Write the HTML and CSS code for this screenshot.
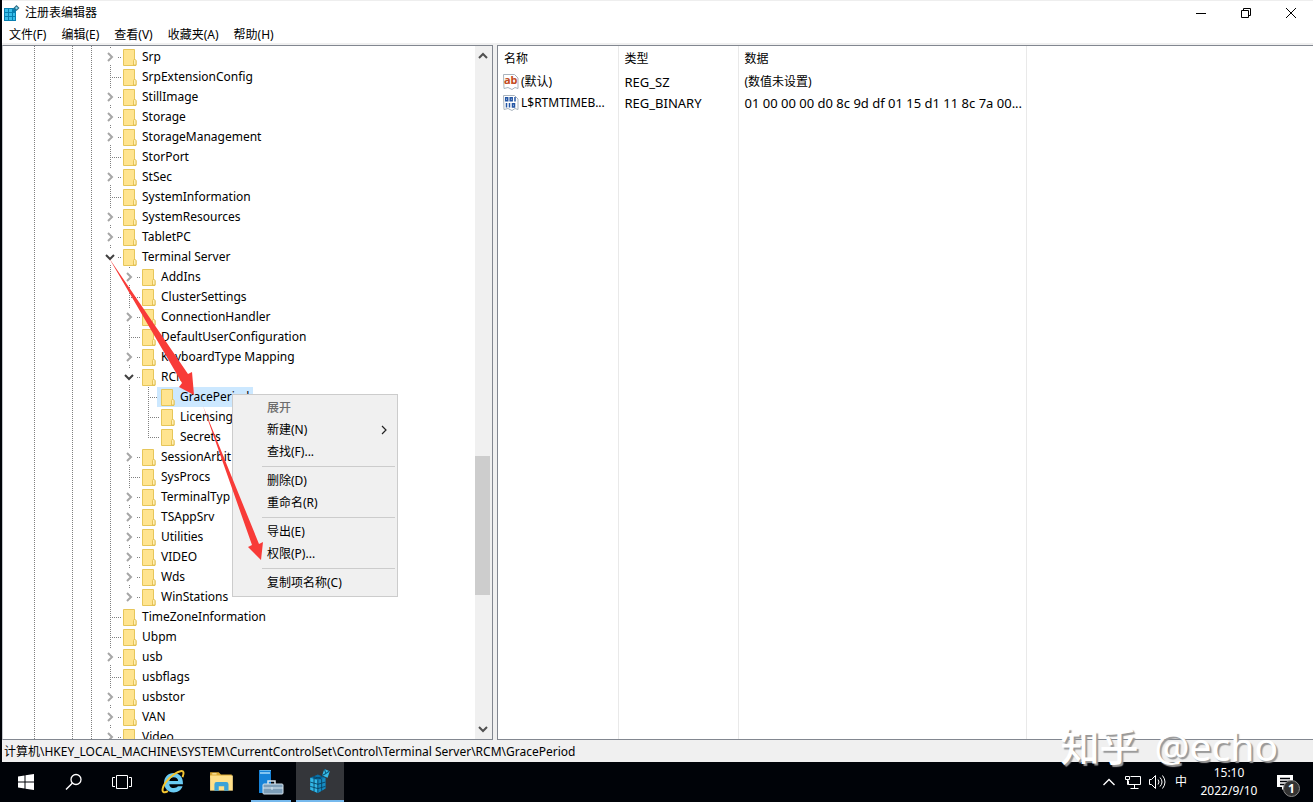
FILE: index.html
```html
<!DOCTYPE html>
<html lang="zh-CN">
<head>
    <meta charset="UTF-8">
    <meta name="viewport" content="width=device-width, initial-scale=1.0">
    <title>注册表编辑器</title>
    <link rel="stylesheet" href="styles.css">
</head>
<body>
    <svg class="symbols" aria-hidden="true">
        <symbol id="folder" viewBox="0 0 14 17">
            <path d="M.5.5h11v10l1.500 1v5H.5z" fill="#ffe48f" stroke="#e6c65a"/>
            <path d="M10.500 16v-4.500l1-1.500 1.500 1.500V16z" fill="#fff0b8" stroke="#dfba45" stroke-width=".8"/>
        </symbol>
        <symbol id="closed" viewBox="0 0 10 10"><path d="M3 1l4 4-4 4" fill="none" stroke="#a6a6a6" stroke-width="2"/></symbol>
        <symbol id="open" viewBox="0 0 10 10"><path d="M1 3l4 4 4-4" fill="none" stroke="#404040" stroke-width="2"/></symbol>
        <symbol id="regedit" viewBox="0 0 16 16">
            <path d="M0 3h12v13H0z" fill="#087fb0"/>
            <path d="M1 4h3v3H1zM5 4h3v3H5zM1 8h3v3H1zM5 8h3v3H5zM9 8h2v3H9zM1 12h3v3H1zM5 12h3v3H5zM9 12h2v3H9z" fill="#38bde9"/>
            <path d="M12.500 0l3 3-3 3-3-3z" fill="#2b6a83"/>
            <path d="M12.500 1.500L14 3l-1.500 1.500L11 3z" fill="#83d8f2"/>
        </symbol>
    </svg>

    <main class="window">
        <header class="titlebar">
            <svg class="app-icon" aria-hidden="true"><use href="#regedit"/></svg>
            <h1>注册表编辑器</h1>
            <div class="window-buttons">
                <button aria-label="最小化"><svg viewBox="0 0 12 12"><path d="M1 6.500h10"/></svg></button>
                <button aria-label="还原"><svg viewBox="0 0 12 12"><path d="M1.500 3.500h7v7h-7zM3.500 3.500v-2h7v7h-2"/></svg></button>
                <button aria-label="关闭"><svg viewBox="0 0 12 12"><path d="M1 1l10 10M11 1L1 11"/></svg></button>
            </div>
        </header>
        <nav class="menubar">
            <button>文件(F)</button>
            <button>编辑(E)</button>
            <button>查看(V)</button>
            <button>收藏夹(A)</button>
            <button>帮助(H)</button>
        </nav>

        <div class="panes">
            <section class="pane tree-pane">
                <div class="tree-scroll">
                    <ul class="tree">
                        <li><div class="row"><button class="toggle" aria-label="展开 Srp"><svg><use href="#closed"/></svg></button><span class="node"><svg><use href="#folder"/></svg>Srp</span></div></li>
                        <li><div class="row leaf"><span class="node"><svg><use href="#folder"/></svg>SrpExtensionConfig</span></div></li>
                        <li><div class="row"><button class="toggle" aria-label="展开 StillImage"><svg><use href="#closed"/></svg></button><span class="node"><svg><use href="#folder"/></svg>StillImage</span></div></li>
                        <li><div class="row"><button class="toggle" aria-label="展开 Storage"><svg><use href="#closed"/></svg></button><span class="node"><svg><use href="#folder"/></svg>Storage</span></div></li>
                        <li><div class="row"><button class="toggle" aria-label="展开 StorageManagement"><svg><use href="#closed"/></svg></button><span class="node"><svg><use href="#folder"/></svg>StorageManagement</span></div></li>
                        <li><div class="row leaf"><span class="node"><svg><use href="#folder"/></svg>StorPort</span></div></li>
                        <li><div class="row"><button class="toggle" aria-label="展开 StSec"><svg><use href="#closed"/></svg></button><span class="node"><svg><use href="#folder"/></svg>StSec</span></div></li>
                        <li><div class="row leaf"><span class="node"><svg><use href="#folder"/></svg>SystemInformation</span></div></li>
                        <li><div class="row"><button class="toggle" aria-label="展开 SystemResources"><svg><use href="#closed"/></svg></button><span class="node"><svg><use href="#folder"/></svg>SystemResources</span></div></li>
                        <li><div class="row"><button class="toggle" aria-label="展开 TabletPC"><svg><use href="#closed"/></svg></button><span class="node"><svg><use href="#folder"/></svg>TabletPC</span></div></li>
                        <li>
                            <div class="row"><button class="toggle" aria-label="折叠 Terminal Server"><svg><use href="#open"/></svg></button><span class="node"><svg><use href="#folder"/></svg>Terminal Server</span></div>
                            <ul>
                                <li><div class="row"><button class="toggle" aria-label="展开 AddIns"><svg><use href="#closed"/></svg></button><span class="node"><svg><use href="#folder"/></svg>AddIns</span></div></li>
                                <li><div class="row leaf"><span class="node"><svg><use href="#folder"/></svg>ClusterSettings</span></div></li>
                                <li><div class="row"><button class="toggle" aria-label="展开 ConnectionHandler"><svg><use href="#closed"/></svg></button><span class="node"><svg><use href="#folder"/></svg>ConnectionHandler</span></div></li>
                                <li><div class="row leaf"><span class="node"><svg><use href="#folder"/></svg>DefaultUserConfiguration</span></div></li>
                                <li><div class="row"><button class="toggle" aria-label="展开 KeyboardType Mapping"><svg><use href="#closed"/></svg></button><span class="node"><svg><use href="#folder"/></svg>KeyboardType Mapping</span></div></li>
                                <li>
                                    <div class="row"><button class="toggle" aria-label="折叠 RCM"><svg><use href="#open"/></svg></button><span class="node"><svg><use href="#folder"/></svg>RCM</span></div>
                                    <ul>
                                        <li><div class="row leaf"><span class="node selected"><svg><use href="#folder"/></svg>GracePeriod</span></div></li>
                                        <li><div class="row leaf"><span class="node"><svg><use href="#folder"/></svg>Licensing</span></div></li>
                                        <li><div class="row leaf"><span class="node"><svg><use href="#folder"/></svg>Secrets</span></div></li>
                                    </ul>
                                </li>
                                <li><div class="row"><button class="toggle" aria-label="展开 SessionArbit"><svg><use href="#closed"/></svg></button><span class="node"><svg><use href="#folder"/></svg>SessionArbit</span></div></li>
                                <li><div class="row leaf"><span class="node"><svg><use href="#folder"/></svg>SysProcs</span></div></li>
                                <li><div class="row"><button class="toggle" aria-label="展开 TerminalTyp"><svg><use href="#closed"/></svg></button><span class="node"><svg><use href="#folder"/></svg>TerminalTyp</span></div></li>
                                <li><div class="row"><button class="toggle" aria-label="展开 TSAppSrv"><svg><use href="#closed"/></svg></button><span class="node"><svg><use href="#folder"/></svg>TSAppSrv</span></div></li>
                                <li><div class="row"><button class="toggle" aria-label="展开 Utilities"><svg><use href="#closed"/></svg></button><span class="node"><svg><use href="#folder"/></svg>Utilities</span></div></li>
                                <li><div class="row"><button class="toggle" aria-label="展开 VIDEO"><svg><use href="#closed"/></svg></button><span class="node"><svg><use href="#folder"/></svg>VIDEO</span></div></li>
                                <li><div class="row"><button class="toggle" aria-label="展开 Wds"><svg><use href="#closed"/></svg></button><span class="node"><svg><use href="#folder"/></svg>Wds</span></div></li>
                                <li><div class="row"><button class="toggle" aria-label="展开 WinStations"><svg><use href="#closed"/></svg></button><span class="node"><svg><use href="#folder"/></svg>WinStations</span></div></li>
                            </ul>
                        </li>
                        <li><div class="row leaf"><span class="node"><svg><use href="#folder"/></svg>TimeZoneInformation</span></div></li>
                        <li><div class="row leaf"><span class="node"><svg><use href="#folder"/></svg>Ubpm</span></div></li>
                        <li><div class="row"><button class="toggle" aria-label="展开 usb"><svg><use href="#closed"/></svg></button><span class="node"><svg><use href="#folder"/></svg>usb</span></div></li>
                        <li><div class="row leaf"><span class="node"><svg><use href="#folder"/></svg>usbflags</span></div></li>
                        <li><div class="row"><button class="toggle" aria-label="展开 usbstor"><svg><use href="#closed"/></svg></button><span class="node"><svg><use href="#folder"/></svg>usbstor</span></div></li>
                        <li><div class="row"><button class="toggle" aria-label="展开 VAN"><svg><use href="#closed"/></svg></button><span class="node"><svg><use href="#folder"/></svg>VAN</span></div></li>
                        <li><div class="row"><button class="toggle" aria-label="展开 Video"><svg><use href="#closed"/></svg></button><span class="node"><svg><use href="#folder"/></svg>Video</span></div></li>
                    </ul>
                </div>
                <div class="scrollbar">
                    <button aria-label="向上滚动"><svg viewBox="0 0 10 10"><path d="M1 7l4-4 4 4"/></svg></button>
                    <div class="track"><div class="thumb"></div></div>
                    <button aria-label="向下滚动"><svg viewBox="0 0 10 10"><path d="M1 3l4 4 4-4"/></svg></button>
                </div>
            </section>

            <section class="pane value-pane">
                <table class="values">
                    <thead>
                        <tr><th class="col-name">名称</th><th class="col-type">类型</th><th class="col-data">数据</th></tr>
                    </thead>
                    <tbody>
                        <tr>
                            <td><div class="value-name"><svg viewBox="0 0 16 16"><path d="M.5.5h11l3.500 3.500v10.500l-3-1-3 2-4-2-4 1z" fill="#fff" stroke="#a9b3bd"/><text x="1" y="10" class="glyph-ab">ab</text></svg>(默认)</div></td>
                            <td class="latin">REG_SZ</td>
                            <td>(数值未设置)</td>
                        </tr>
                        <tr>
                            <td><div class="value-name"><svg viewBox="0 0 16 16"><path d="M.5.5h11l3.500 3.500v10.500l-3-1-3 2-4-2-4 1z" fill="#fff" stroke="#a9b3bd"/><path d="M2.700 2.700h2v3h-2zM7.200 2.700h2v3h-2zM12 2v4.400M3.500 8v4.500M6.500 8v4.500M9.500 8.700h2v3.200h-2z" fill="none" stroke="#2456a5" stroke-width="1.500"/></svg>L$RTMTIMEB...</div></td>
                            <td class="latin">REG_BINARY</td>
                            <td class="latin">01 00 00 00 d0 8c 9d df 01 15 d1 11 8c 7a 00...</td>
                        </tr>
                        <tr class="filler"><td></td><td></td><td></td></tr>
                    </tbody>
                </table>
            </section>
        </div>
        <footer class="statusbar">计算机\HKEY_LOCAL_MACHINE\SYSTEM\CurrentControlSet\Control\Terminal Server\RCM\GracePeriod</footer>
    </main>

    <div class="context-menu" role="menu">
        <button role="menuitem" disabled>展开</button>
        <button role="menuitem">新建(N)<svg viewBox="0 0 10 10"><path d="M3 1l4 4-4 4"/></svg></button>
        <button role="menuitem">查找(F)...</button>
        <hr>
        <button role="menuitem">删除(D)</button>
        <button role="menuitem">重命名(R)</button>
        <hr>
        <button role="menuitem">导出(E)</button>
        <button role="menuitem">权限(P)...</button>
        <hr>
        <button role="menuitem">复制项名称(C)</button>
    </div>

    <svg class="arrows" viewBox="0 0 160 310" aria-hidden="true">
        <path d="M1 1L80 117l4-2 2 23-15-8 3-4z"/>
        <path d="M95 149L151 287l4-2-2 18-13-13 4-2z"/>
    </svg>

    <footer class="taskbar">
        <div class="system-buttons">
            <button class="task" aria-label="开始"><svg viewBox="0 0 18 18" class="icon-start"><path d="M1 3.500l6.500-1V8.500H1zM8.500 2.300L17 1v7.500H8.500zM1 9.500h6.500v6L1 14.600zM8.500 9.500H17V17l-8.500-1.300z" fill="#fff"/></svg></button>
            <button class="task" aria-label="搜索"><svg viewBox="0 0 18 18" class="icon-start"><circle cx="11" cy="6.500" r="5" fill="none" stroke="#fff" stroke-width="1.300"/><path d="M7.500 10L1 16.500" stroke="#fff" stroke-width="1.500"/></svg></button>
            <button class="task" aria-label="任务视图"><svg viewBox="0 0 22 18" class="icon-view"><path d="M5.500 2.500h11v13h-11zM4 4.500H1.500v9H4M18 4.500h2.500v9H18" fill="none" stroke="#fff"/></svg></button>
        </div>
        <div class="app-buttons">
            <button class="task" aria-label="Internet Explorer">
                <svg viewBox="0 0 24 24">
                    <path d="M21.200 14H8.500c.3 2.300 2 3.600 4.300 3.600 1.800 0 3-.6 3.700-1.600h4.300C19.600 19.600 16.500 21.700 12.700 21.700 7.400 21.700 3.800 18 3.800 12.800S7.500 3.800 12.700 3.800 21.400 7.500 21.200 14zM8.600 11h8.200c-.3-2.100-1.800-3.300-4-3.300S9 8.900 8.600 11z" fill="#6acbf3"/>
                    <path d="M20.800 7.500C22.500 3.500 22 1.500 19 2 13 3 4 12 2.500 18c-.8 3.500 1.300 4.500 4.800 2.500" fill="none" stroke="#f4c632" stroke-width="1.800"/>
                </svg>
            </button>
            <button class="task" aria-label="文件资源管理器">
                <svg viewBox="0 0 24 24">
                    <path d="M1 3h8l2 2h10v3H1z" fill="#dba933"/><path d="M1 6h21v14H1z" fill="#ffe08a"/><path d="M5 20v-6q0-2 2-2h9q2 0 2 2v6h-4v-4H9v4z" fill="#3ba3d8"/><path d="M3 4.500h4" stroke="#fff1b9"/>
                </svg>
            </button>
            <button class="task running" aria-label="服务器管理器">
                <svg viewBox="0 0 26 26">
                    <path d="M1 1h12v23H1z" fill="#1683d8"/><path d="M2 4h10" stroke="#a9daf8" stroke-width="1.500"/><path d="M2 1.500h11" stroke="#60b5ed"/><path d="M10 15V12h7v3" fill="none" stroke="#d9e5ed" stroke-width="1.500"/><rect x="5" y="15" width="20" height="10" rx="1" fill="#7d9eb8" stroke="#d2e1eb"/><path d="M5 19h20M14 18v3" stroke="#dae8f1"/>
                </svg>
            </button>
            <button class="task active" aria-label="注册表编辑器">
                <svg viewBox="0 0 24 24">
                    <path d="M3 9l7-3 7 3v10l-7 4-7-3z" fill="#0870a8"/><path d="M3 9l7 2v12l-7-3z" fill="#33b7e6"/><path d="M10 11l7-2v10l-7 4z" fill="#168bc2"/><path d="M3 13l7 2 7-2M3 17l7 2 7-2M6.500 8v14M10 11v12M13.500 10v11M6 8l7 2M14 8l-7 2" fill="none" stroke="#07405f" stroke-width=".8"/><path d="M16 1l5 2-2 6-5-2z" fill="#38bde9"/><path d="M16 1l1.500 4-3.500 2M17.500 5l3-2" fill="none" stroke="#08567b"/>
                </svg>
            </button>
        </div>
        <div class="tray">
            <button aria-label="显示隐藏的图标"><svg viewBox="0 0 18 18"><path d="M3.500 12L9 6.500l5.500 5.500" stroke-width="1.400"/></svg></button>
            <button aria-label="网络"><svg viewBox="0 0 18 18"><path d="M6.500 3.500h10v8h-12v-4M10.500 11.500v4M6.500 15.500h8M1.500 3.500h4v3h-4zM3.500 6.500v5h1"/></svg></button>
            <button aria-label="音量"><svg viewBox="0 0 18 18"><path d="M1.500 6.500h2l4-4v13l-4-4h-2zM10 6.500q2 2.500 0 5M12 4.500q4 4.500 0 9M14.500 2.500q5 6.500 0 13"/></svg></button>
            <button class="ime">中</button>
            <button class="clock"><span>15:10</span><span>2022/9/10</span></button>
            <button class="notice" aria-label="通知"><svg viewBox="0 0 18 18"><path class="bubble" d="M1 2h16v12H9l-3 3v-3H1z"/><path class="lines" d="M4 5.500h10M4 8.500h10M4 11.500h7"/></svg><span class="badge">1</span></button>
        </div>
    </footer>
    <div class="watermark"><span class="brand">知乎</span><span>@echo</span></div>
</body>
</html>
```

FILE: styles.css
```css
* {
    box-sizing: border-box;
}
body {
    margin: 0;
    height: 100vh;
    display: flex;
    flex-direction: column;
    position: relative;
    overflow: hidden;
    background: #000308;
    color: #000;
    font-family: "Noto Sans", "Noto Sans CJK SC", sans-serif;
    font-size: 12px;
    line-height: 20px;
}
button {
    font: inherit;
    color: inherit;
    background: none;
    border: none;
    padding: 0;
}
svg {
    display: block;
    flex: none;
}
.symbols {
    position: absolute;
    width: 0;
    height: 0;
}

/* Window frame */
.window {
    flex: 1;
    min-height: 0;
    margin-left: 2px;
    display: flex;
    flex-direction: column;
    background: #fff;
}
.titlebar {
    display: flex;
    align-items: center;
    height: 25px;
    padding-left: 2px;
    border-top: 1px solid #eee;
}
.titlebar h1 {
    margin: 0 0 0 5px;
    font-size: 12px;
    font-weight: normal;
    line-height: 22px;
}
.app-icon {
    width: 16px;
    height: 16px;
}
.window-buttons {
    display: flex;
    margin-left: auto;
}
.window-buttons button {
    width: 45px;
    height: 24px;
    display: grid;
    place-items: center;
}
.window-buttons svg {
    width: 12px;
    height: 12px;
    fill: none;
    stroke: #000;
}
.menubar {
    display: flex;
    gap: 15px;
    height: 20px;
    padding-left: 7px;
    border-bottom: 2px solid #f0f0f0;
}
.menubar button {
    line-height: 20px;
}
.panes {
    flex: 1;
    min-height: 0;
    display: flex;
    gap: 4px;
    background: #f0f0f0;
}
.pane {
    display: flex;
    background: #fff;
    border: 1px solid #828790;
    min-width: 0;
}
.statusbar {
    height: 22px;
    padding-left: 2px;
    line-height: 24px;
    background: #f0f0f0;
    white-space: nowrap;
}

/* Key tree */
.tree-pane {
    width: 491px;
    border-left-color: #c4c7cc;
}
.tree-scroll {
    flex: 1;
    overflow: hidden;
    background:
        repeating-linear-gradient(#808080 0 1px, transparent 1px 2px) 31px 0 / 1px 100% no-repeat,
        repeating-linear-gradient(#808080 0 1px, transparent 1px 2px) 69px 0 / 1px 100% no-repeat,
        repeating-linear-gradient(#808080 0 1px, transparent 1px 2px) 88px 0 / 1px 100% no-repeat;
}
.tree,
.tree ul {
    list-style: none;
    margin: 0;
    padding: 0;
}
.tree {
    padding: 1px 0 0 99px;
}
.tree ul {
    padding-left: 19px;
}
.tree li {
    background: repeating-linear-gradient(#808080 0 1px, transparent 1px 2px) 8px 0 / 1px 100% no-repeat;
}
.tree ul li:last-child {
    background-size: 1px 10px;
}
.row {
    display: flex;
    align-items: center;
    height: 20px;
    background: repeating-linear-gradient(90deg, #808080 0 1px, transparent 1px 2px) 8px 10px / 12px 1px no-repeat;
}
.leaf {
    padding-left: 17px;
}
.toggle {
    width: 16px;
    height: 16px;
    margin-right: 1px;
    display: grid;
    place-items: center;
    background: #fff;
}
.toggle svg {
    width: 10px;
    height: 10px;
}
.node {
    display: flex;
    align-items: center;
    gap: 5px;
    height: 20px;
    padding: 0 4px;
    white-space: nowrap;
}
.node svg {
    width: 14px;
    height: 17px;
}
.selected {
    background: #cce8ff;
}
.scrollbar {
    width: 17px;
    padding-right: 2px;
    display: flex;
    flex-direction: column;
    background: #f0f0f0;
}
.scrollbar button {
    height: 20px;
    display: grid;
    place-items: center;
}
.scrollbar svg {
    width: 10px;
    height: 10px;
    fill: none;
    stroke: #505050;
    stroke-width: 2;
}
.track {
    flex: 1;
    display: flex;
    flex-direction: column;
}
.track::before {
    content: "";
    flex: 390;
}
.track::after {
    content: "";
    flex: 124;
}
.thumb {
    flex: 139;
    background: #cdcdcd;
}

/* Values */
.value-pane {
    flex: 1;
    border-right: none;
}
.values {
    height: 100%;
    border-collapse: collapse;
    table-layout: fixed;
    width: 529px;
}
.col-name,
.col-type {
    width: 120px;
}
.values th,
.values td {
    height: 21px;
    padding: 0 6px;
    border-right: 1px solid #e9e9e9;
    font-weight: normal;
    text-align: left;
    white-space: nowrap;
    overflow: hidden;
}
.values th {
    height: 25px;
}
.values .latin {
    font-size: 13px;
}
.values .filler td {
    height: auto;
}
.value-name {
    display: flex;
    align-items: center;
    gap: 2px;
    margin: 0 -4px 0 -1px;
}
.value-name svg {
    width: 16px;
    height: 16px;
}
.glyph-ab {
    font-size: 11px;
    font-weight: bold;
    fill: #c34b22;
}

/* Context menu */
.context-menu {
    position: absolute;
    left: 232px;
    top: 394px;
    width: 166px;
    padding: 2px;
    background: #f0f0f0;
    border: 1px solid #ccc;
}
.context-menu button {
    display: flex;
    align-items: center;
    justify-content: space-between;
    width: 100%;
    height: 22px;
    padding: 0 6px 0 32px;
}
.context-menu button:disabled {
    color: #6d6d6d;
    font-weight: 500;
}
.context-menu svg {
    width: 10px;
    height: 10px;
    fill: none;
    stroke: #222;
    stroke-width: 1.2;
}
.context-menu hr {
    margin: 3px 0 3px 27px;
    border: none;
    border-top: 1px solid #ccc;
}
.arrows {
    position: absolute;
    left: 108px;
    top: 257px;
    width: 160px;
    height: 310px;
    overflow: visible;
    fill: #f83b38;
    pointer-events: none;
}

/* Taskbar */
.taskbar {
    height: 40px;
    padding-left: 2px;
    display: flex;
    color: #fff;
}
.system-buttons,
.app-buttons,
.tray {
    display: flex;
}
.app-buttons {
    gap: 1px;
    margin-left: 3px;
}
.task {
    width: 48px;
    height: 40px;
    display: grid;
    place-items: center;
}
.task svg {
    width: 26px;
    height: 26px;
}
.task .icon-start {
    width: 18px;
    height: 18px;
}
.task .icon-view {
    width: 22px;
    height: 18px;
}
.running {
    background: linear-gradient(#76b9ed, #76b9ed) center bottom / 40px 2px no-repeat;
}
.active {
    background: #34363a;
    border-bottom: 2px solid #76b9ed;
}
.tray {
    margin-left: auto;
    align-items: center;
}
.tray button {
    width: 24px;
    height: 40px;
    display: grid;
    place-items: center;
}
.tray svg {
    width: 18px;
    height: 18px;
    fill: none;
    stroke: #fff;
}
.tray .clock {
    width: 72px;
    line-height: 18px;
    align-content: center;
}
.tray .notice {
    position: relative;
    width: 40px;
    margin-right: 8px;
}
.notice .bubble {
    fill: #fff;
    stroke: none;
}
.notice .lines {
    stroke: #000308;
    stroke-width: 1.3;
}
.badge {
    position: absolute;
    left: 18px;
    top: 18px;
    width: 17px;
    height: 17px;
    border: 1px solid #888;
    border-radius: 50%;
    background: #333;
    font-size: 12px;
    font-weight: bold;
    line-height: 15px;
}
.watermark {
    position: absolute;
    right: 35px;
    bottom: 36px;
    display: flex;
    gap: 16px;
    color: #fff;
    font-size: 39px;
    line-height: 40px;
    text-shadow: 2px 2px 1px #999;
    pointer-events: none;
}
.brand {
    font-weight: 500;
}
```
